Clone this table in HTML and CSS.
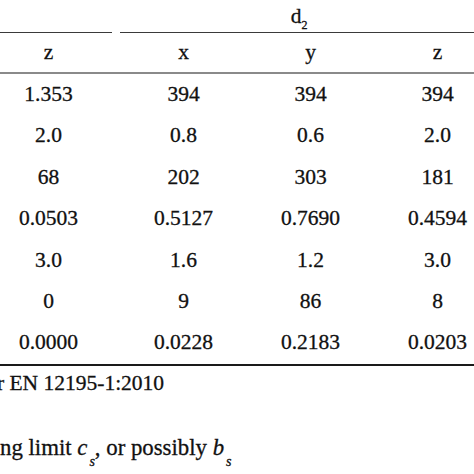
FILE: index.html
```html
<!DOCTYPE html>
<html>
<head>
<meta charset="utf-8">
<link rel="stylesheet" href="styles.css">
</head>
<body>
<div class="page">
  <div class="table">
    <div class="groups">
      <div class="grp"></div>
      <div class="grp grp-d2">d<sub class="sub2">2</sub></div>
    </div>
    <div class="row head"><span>z</span><span>x</span><span>y</span><span>z</span></div>
    <div class="row"><span>1.353</span><span>394</span><span>394</span><span>394</span></div>
    <div class="row"><span>2.0</span><span>0.8</span><span>0.6</span><span>2.0</span></div>
    <div class="row"><span>68</span><span>202</span><span>303</span><span>181</span></div>
    <div class="row"><span>0.0503</span><span>0.5127</span><span>0.7690</span><span>0.4594</span></div>
    <div class="row"><span>3.0</span><span>1.6</span><span>1.2</span><span>3.0</span></div>
    <div class="row"><span>0</span><span>9</span><span>86</span><span>8</span></div>
    <div class="row last"><span>0.0000</span><span>0.0228</span><span>0.2183</span><span>0.0203</span></div>
  </div>
  <p class="note">for EN 12195-1:2010</p>
  <p class="note2">ng limit <i>c</i><sub class="subs">s</sub>, or possibly <i>b</i><sub class="subs">s</sub></p>
</div>
</body>
</html>
```
FILE: styles.css
```css
html, body {
  margin: 0;
  padding: 0;
  background: #ffffff;
}
body {
  width: 474px;
  height: 474px;
  overflow: hidden;
  font-family: "Liberation Serif", "Times New Roman", serif;
  font-size: 21.5px;
  color: #111111;
  -webkit-text-stroke: 0.3px #111111;
}
.page {
  width: 474px;
  overflow: hidden;
}
.table {
  margin-left: -15px;
  width: 516px;
}
.groups {
  display: grid;
  grid-template-columns: 127px 381px;
  column-gap: 8px;
}
.grp {
  height: 32px;
  line-height: 32px;
  border-bottom: 1px solid #3a3a3a;
  text-align: center;
}
.grp-d2 {
  padding-right: 23px;
}
.sub2 {
  font-size: 12px;
  vertical-align: -6px;
  line-height: 0;
}
.row {
  display: grid;
  grid-template-columns: 135px 127px 127px 127px;
  height: 41.4px;
  line-height: 41.4px;
  text-align: center;
}
.row span:first-child {
  padding-right: 8px;
}
.head {
  height: 39px;
  line-height: 39px;
  border-bottom: 2px solid #8a8a8a;
}
.last {
  border-bottom: 2px solid #1a1a1a;
}
.note {
  margin: 3px 0 0 -21px;
  line-height: 28px;
  white-space: nowrap;
}
.note2 {
  margin: 37px 0 0 0;
  padding-bottom: 6px;
  line-height: 28px;
  font-size: 22.8px;
  white-space: nowrap;
}
.subs {
  font-size: 14px;
  vertical-align: -11px;
  line-height: 1;
  font-style: italic;
  margin-left: 2px;
}
```
